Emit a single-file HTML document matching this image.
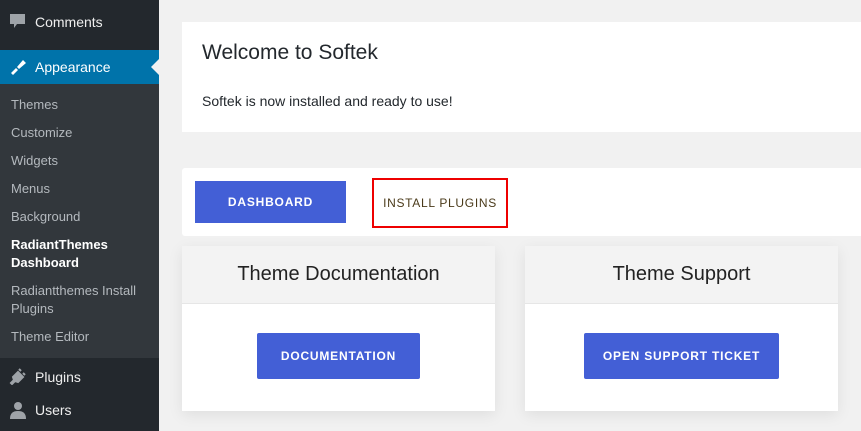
<!DOCTYPE html>
<html><head><style>
*{margin:0;padding:0;box-sizing:border-box}
body{width:861px;height:431px;overflow:hidden;background:#f1f1f1;font-family:"Liberation Sans",sans-serif;position:relative}
.sb{position:absolute;left:0;top:0;width:159px;height:431px;background:#23282d}
.top{position:absolute;left:0;width:159px;color:#eee;font-size:14px}
.ap{position:absolute;left:0;top:50px;width:159px;height:34px;background:#0073aa;color:#fff;font-size:14px}
.sub{position:absolute;left:0;top:84px;width:159px;height:274px;background:#32373c}
.sub div{position:absolute;left:11px;font-size:13px;color:#b4b9be;line-height:18px}
.ico{position:absolute;left:9px}
.p{position:absolute;background:#fff}
.btn{position:absolute;background:#435fd6;color:#fff;font-weight:bold;font-size:12px;letter-spacing:0.8px;display:flex;align-items:center;justify-content:center;border-radius:2px}
.card{position:absolute;top:246px;width:313px;height:165px;background:#fff;box-shadow:0 4px 14px rgba(0,0,0,.08)}
.card .h{height:58px;background:#f3f3f3;border-bottom:1px solid #e6e6e6;font-size:20px;color:#222;display:flex;align-items:center;justify-content:center}
</style></head><body>
<div class="sb"></div>
<div class="top" style="top:13px;height:20px"><svg class="ico" width="18" height="18" viewBox="0 0 18 18" style="top:0"><path d="M1 1h15v10H8l-3 4v-4H1z" fill="#9ea3a8"/></svg><span style="position:absolute;left:35px;top:1px">Comments</span></div>
<div class="ap"><svg class="ico" width="20" height="20" viewBox="0 0 20 20" style="top:7px"><path d="M2 16l5-5 2 2-5 5zM8 10l6-7 3 3-7 6z" fill="#fff"/></svg><span style="position:absolute;left:35px;top:9px">Appearance</span><div style="position:absolute;right:0;top:9px;width:0;height:0;border:8px solid transparent;border-right-color:#f1f1f1"></div></div>
<div class="sub">
<div style="top:12px">Themes</div>
<div style="top:40px">Customize</div>
<div style="top:68px">Widgets</div>
<div style="top:96px">Menus</div>
<div style="top:124px">Background</div>
<div style="top:152px;color:#fff;font-weight:bold">RadiantThemes<br>Dashboard</div>
<div style="top:198px">Radiantthemes Install<br>Plugins</div>
<div style="top:244px">Theme Editor</div>
</div>
<div class="top" style="top:367px;height:20px"><svg class="ico" width="18" height="18" viewBox="0 0 18 18" style="top:0"><path d="M2 16l3-3-1-3 5-5 5 5-5 5-3-1-3 3zM10 2l2 2M14 6l2 2" stroke="#9ea3a8" stroke-width="2" fill="#9ea3a8"/></svg><span style="position:absolute;left:35px;top:2px">Plugins</span></div>
<div class="top" style="top:400px;height:20px"><svg class="ico" width="18" height="18" viewBox="0 0 18 18" style="top:1px"><circle cx="9" cy="5" r="4" fill="#9ea3a8"/><path d="M1 18c0-6 3-8 8-8s8 2 8 8z" fill="#9ea3a8"/></svg><span style="position:absolute;left:35px;top:2px">Users</span></div>

<div class="p" style="left:182px;top:22px;width:679px;height:110px">
<div style="position:absolute;left:20px;top:19px;font-size:21px;color:#23282d">Welcome to Softek</div>
<div style="position:absolute;left:20px;top:71px;font-size:14px;color:#23282d">Softek is now installed and ready to use!</div>
</div>
<div class="p" style="left:182px;top:168px;width:679px;height:68px;border-radius:3px 0 0 3px"></div>
<div class="btn" style="left:195px;top:181px;width:151px;height:42px;border-radius:0">DASHBOARD</div>
<div style="position:absolute;left:372px;top:178px;width:136px;height:50px;border:2px solid #e00;font-size:12px;letter-spacing:0.7px;color:#4a3a1a;display:flex;align-items:center;justify-content:center">INSTALL PLUGINS</div>

<div class="card" style="left:182px"><div class="h">Theme Documentation</div>
<div class="btn" style="left:75px;top:87px;width:163px;height:46px">DOCUMENTATION</div></div>
<div class="card" style="left:525px"><div class="h">Theme Support</div>
<div class="btn" style="left:59px;top:87px;width:195px;height:46px">OPEN SUPPORT TICKET</div></div>
</body></html>
